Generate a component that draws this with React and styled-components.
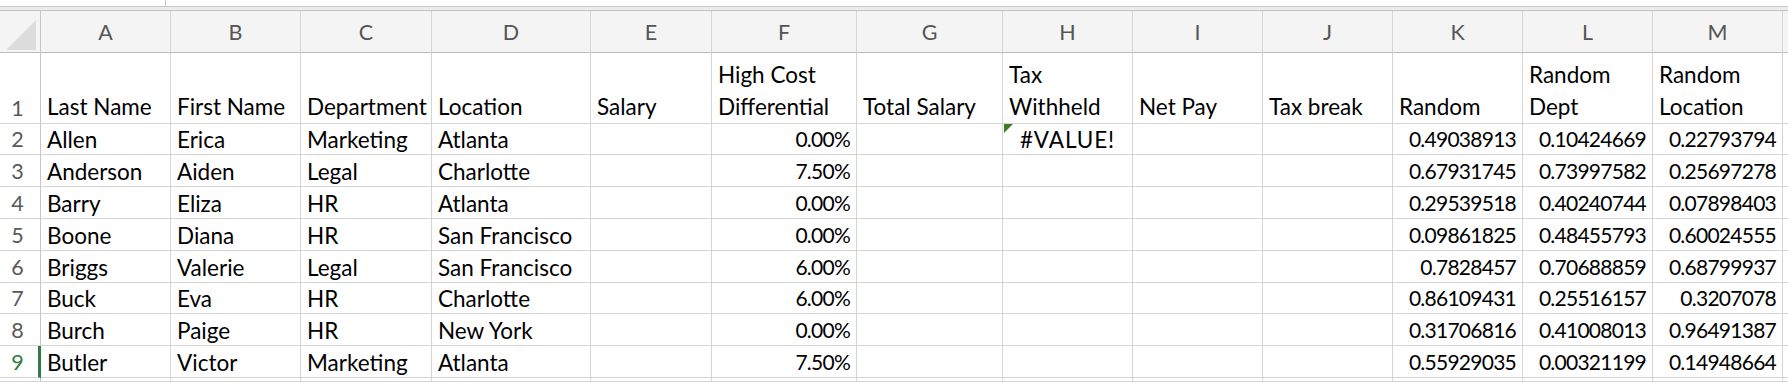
import React from 'react';
import styled, { createGlobalStyle, css } from 'styled-components';

const GlobalStyle = createGlobalStyle`
  html, body { margin: 0; padding: 0; background: #ffffff; }
  body {
    font-family: Lato, "Noto Sans", sans-serif;
    overflow: hidden;
    -webkit-font-smoothing: antialiased;
  }
  * { box-sizing: border-box; }
`;

const COLS = [41, 130, 130, 131, 159, 121, 145, 146, 130, 130, 130, 130, 130, 130];
const ROWS = [42, 71, 31, 32, 32, 32, 32, 31, 32, 32];
const LETTERS = ['A', 'B', 'C', 'D', 'E', 'F', 'G', 'H', 'I', 'J', 'K', 'L', 'M'];

const Page = styled.div`
  width: 1788px;
  height: 382px;
  overflow: hidden;
  display: flex;
  flex-direction: column;
`;

const FormulaEdge = styled.div`
  height: 11px;
  flex: none;
  display: grid;
  grid-template-columns: 165px 1px 1fr;
  grid-template-rows: 6px 1px 3px 1px;
`;

const NameBoxDivider = styled.div`
  grid-column: 2;
  grid-row: 1;
  background: #c4c4c4;
`;

const EdgeLine = styled.div`
  grid-column: 1 / -1;
  grid-row: ${(p) => p.$row};
  background: ${(p) => p.$color};
`;

const Sheet = styled.div`
  display: grid;
  grid-template-columns: ${COLS.map((c) => `${c}px`).join(' ')} 1fr;
  grid-template-rows: ${ROWS.map((r) => `${r}px`).join(' ')} 1fr;
  flex: 1;
  font-size: 22.5px;
  color: #000;
`;

const Corner = styled.div`
  background: #f4f4f4;
  border-right: 1px solid #c6c6c6;
  border-bottom: 1px solid #bdbdbd;
  position: relative;
  &::after {
    content: '';
    position: absolute;
    left: 6px;
    top: 9px;
    width: 30px;
    height: 30px;
    background: #dcdcdc;
    clip-path: polygon(100% 0, 100% 100%, 0 100%);
  }
`;

const ColHeader = styled.div`
  background: #f4f4f4;
  border-right: 1px solid #d6d6d6;
  border-bottom: 1px solid #bdbdbd;
  display: flex;
  align-items: center;
  justify-content: center;
  color: #555555;
  font-size: 21.5px;
  padding-top: 1px;
`;

const RowHeader = styled.div`
  background: #ffffff;
  border-right: ${(p) => (p.$active ? '3px solid #2f7a45' : '1px solid #c6c6c6')};
  border-bottom: 1px solid #d4d4d4;
  display: flex;
  align-items: flex-end;
  justify-content: center;
  padding: 0 ${(p) => (p.$active ? '3px' : '5px')} 2px 0;
  line-height: 25px;
  color: ${(p) => (p.$active ? '#2f7a45' : '#595959')};
  font-size: 21.5px;
`;

const Cell = styled.div`
  border-right: 1px solid #d4d4d4;
  border-bottom: 1px solid #d4d4d4;
  display: flex;
  align-items: flex-end;
  padding: 0 6px 1px 6px;
  line-height: 26px;
  white-space: nowrap;
  position: relative;
  justify-content: ${(p) =>
    p.$align === 'right' ? 'flex-end' : p.$align === 'center' ? 'center' : 'flex-start'};
  ${(p) =>
    p.$num &&
    css`
      font-size: 21px;
      letter-spacing: -0.75px;
      font-variant-numeric: tabular-nums;
      padding-bottom: 2px;
    `}
  ${(p) =>
    p.$title &&
    css`
      line-height: 32px;
      padding-bottom: 0;
      white-space: normal;
    `}
`;

const ErrorText = styled.span`
  font-size: 22.5px;
  letter-spacing: 0.9px;
`;

const Filler = styled.div`
  border-bottom: 1px solid ${(p) => (p.$head ? '#bdbdbd' : '#d4d4d4')};
  background: ${(p) => (p.$head ? '#f4f4f4' : '#ffffff')};
`;

const ErrorFlag = styled.span`
  position: absolute;
  left: 1px;
  top: 0;
  width: 9px;
  height: 9px;
  background: #3b7d23;
  clip-path: polygon(0 0, 100% 0, 0 100%);
`;

const TitleText = styled.span`
  display: block;
`;

const titles = [
  ['Last Name'],
  ['First Name'],
  ['Department'],
  ['Location'],
  ['Salary'],
  ['High Cost', 'Differential'],
  ['Total Salary'],
  ['Tax', 'Withheld'],
  ['Net Pay'],
  ['Tax break'],
  ['Random'],
  ['Random', 'Dept'],
  ['Random', 'Location'],
];

const data = [
  ['Allen', 'Erica', 'Marketing', 'Atlanta', '0.00%', '0.49038913', '0.10424669', '0.22793794'],
  ['Anderson', 'Aiden', 'Legal', 'Charlotte', '7.50%', '0.67931745', '0.73997582', '0.25697278'],
  ['Barry', 'Eliza', 'HR', 'Atlanta', '0.00%', '0.29539518', '0.40240744', '0.07898403'],
  ['Boone', 'Diana', 'HR', 'San Francisco', '0.00%', '0.09861825', '0.48455793', '0.60024555'],
  ['Briggs', 'Valerie', 'Legal', 'San Francisco', '6.00%', '0.7828457', '0.70688859', '0.68799937'],
  ['Buck', 'Eva', 'HR', 'Charlotte', '6.00%', '0.86109431', '0.25516157', '0.3207078'],
  ['Burch', 'Paige', 'HR', 'New York', '0.00%', '0.31706816', '0.41008013', '0.96491387'],
  ['Butler', 'Victor', 'Marketing', 'Atlanta', '7.50%', '0.55929035', '0.00321199', '0.14948664'],
];

function DataRow({ row, num }) {
  const [last, first, dept, loc, pct, k, l, m] = row;
  return (
    <>
      <RowHeader $active={num === 9}>{num}</RowHeader>
      <Cell>{last}</Cell>
      <Cell>{first}</Cell>
      <Cell>{dept}</Cell>
      <Cell>{loc}</Cell>
      <Cell />
      <Cell $align="right" $num>{pct}</Cell>
      <Cell />
      {num === 2 ? (
        <Cell $align="center">
          <ErrorFlag />
          <ErrorText>#VALUE!</ErrorText>
        </Cell>
      ) : (
        <Cell />
      )}
      <Cell />
      <Cell />
      <Cell $align="right" $num>{k}</Cell>
      <Cell $align="right" $num>{l}</Cell>
      <Cell $align="right" $num>{m}</Cell>
      <Filler />
    </>
  );
}

export default function App() {
  return (
    <Page>
      <GlobalStyle />
      <FormulaEdge>
        <NameBoxDivider />
        <EdgeLine $row={2} $color="#c8c8c8" />
        <EdgeLine $row={3} $color="#ececec" />
        <EdgeLine $row={4} $color="#c4c4c4" />
      </FormulaEdge>
      <Sheet>
        <Corner />
        {LETTERS.map((l) => (
          <ColHeader key={l}>{l}</ColHeader>
        ))}
        <Filler $head />

        <RowHeader>1</RowHeader>
        {titles.map((t, i) => (
          <Cell key={i} $title>
            <div>
              {t.map((line, j) => (
                <TitleText key={j}>{line}</TitleText>
              ))}
            </div>
          </Cell>
        ))}
        <Filler />

        {data.map((row, i) => (
          <DataRow key={i} row={row} num={i + 2} />
        ))}
        <RowHeader />
        {LETTERS.map((l) => (
          <Cell key={l} />
        ))}
        <Filler />
      </Sheet>
    </Page>
  );
}
